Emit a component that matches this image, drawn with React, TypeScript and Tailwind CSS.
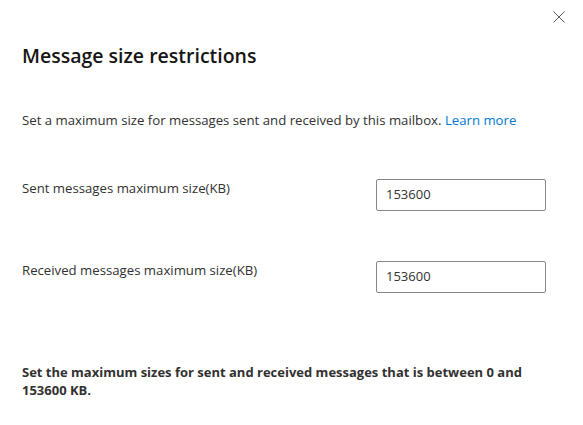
import React from "react";

export default function App() {
  return (
    <div
      className="w-[583px] h-[425px] bg-white overflow-hidden flex flex-col"
      style={{ fontFamily: '"Open Sans", "Noto Sans", sans-serif' }}
    >
      <div className="flex justify-end pt-[11px] pr-[18px] h-[34px]">
        <button className="w-[12px] h-[12px] flex items-center justify-center text-[#605e5c]">
          <svg width="12" height="12" viewBox="0 0 12 12" fill="none">
            <path d="M0.5 0.5L11.5 11.5M11.5 0.5L0.5 11.5" stroke="#605e5c" strokeWidth="1" />
          </svg>
        </button>
      </div>
      <div className="px-[22px]">
        <h1 className="text-[19.5px] font-semibold leading-[26px] text-[#161514] mt-[9px]">
          Message size restrictions
        </h1>
        <p className="text-[13.2px] leading-[18px] text-[#323130] mt-[42px]">
          Set a maximum size for messages sent and received by this mailbox.{" "}
          <span className="text-[#0078d4]">Learn more</span>
        </p>
        <div className="flex justify-between items-start mt-[50px]">
          <label className="text-[13.2px] leading-[18px] text-[#323130]">
            Sent messages maximum size(KB)
          </label>
          <div className="w-[170px] h-[32px] border border-[#8a8886] rounded-[2px] flex items-center px-[9px] text-[13px] text-[#323130] mr-[15px]">
            153600
          </div>
        </div>
        <div className="flex justify-between items-start mt-[50px]">
          <label className="text-[13.2px] leading-[18px] text-[#323130]">
            Received messages maximum size(KB)
          </label>
          <div className="w-[170px] h-[32px] border border-[#8a8886] rounded-[2px] flex items-center px-[9px] text-[13px] text-[#323130] mr-[15px]">
            153600
          </div>
        </div>
        <p className="text-[13px] leading-[18px] font-bold text-[#323130] mt-[70px] w-[530px]">
          Set the maximum sizes for sent and received messages that is between 0 and 153600 KB.
        </p>
      </div>
    </div>
  );
}
